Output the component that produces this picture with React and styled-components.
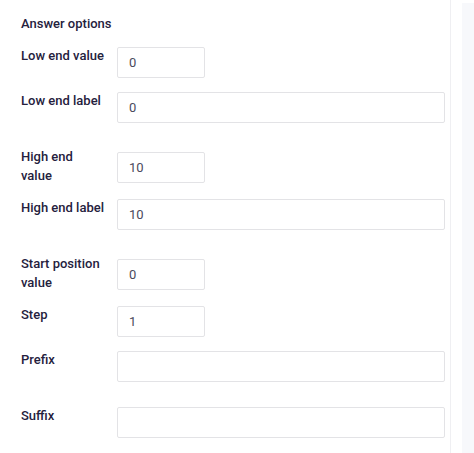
import React from "react";
import styled, { createGlobalStyle } from "styled-components";

const GlobalStyle = createGlobalStyle`
  html, body {
    margin: 0;
    padding: 0;
    background: #ffffff;
  }
  body {
    font-family: Roboto, "Noto Sans", sans-serif;
    color: #25213d;
  }
`;

const fields = [
  { label: ["Low end value"], value: "0", wide: false },
  { label: ["Low end label"], value: "0", wide: true },
  { label: ["High end", "value"], value: "10", wide: false },
  { label: ["High end label"], value: "10", wide: true },
  { label: ["Start position", "value"], value: "0", wide: false },
  { label: ["Step"], value: "1", wide: false },
  { label: ["Prefix"], value: "", wide: true },
  { label: ["Suffix"], value: "", wide: true },
];

function App() {
  return (
    <>
      <GlobalStyle />
      <Page>
        <Panel>
          <Title>Answer options</Title>
          {fields.map((f) => (
            <Row key={f.label.join(" ")} $wide={f.wide}>
              <Label>
                {f.label.map((line, i) => (
                  <span key={i}>
                    {i > 0 && <br />}
                    {line}
                  </span>
                ))}
              </Label>
              <Input
                $wide={f.wide}
                $tall={f.label.length > 1}
                defaultValue={f.value}
              />
            </Row>
          ))}
        </Panel>
        <Side />
      </Page>
    </>
  );
}

export default App;

const Page = styled.div`
  display: flex;
  flex-direction: row;
  height: 453px;
  width: 474px;
  overflow: hidden;
`;

const Panel = styled.div`
  width: 429px;
  padding: 14px 0 0 21px;
  border-right: 1px solid #efeff2;
  display: flex;
  flex-direction: column;
  gap: 13px;
`;

const Side = styled.div`
  flex: 1;
  margin-left: 11px;
  margin-top: 3px;
  background: #f7f8fb;
`;

const Title = styled.div`
  font-size: 13px;
  font-weight: 500;
  line-height: 19px;
`;

const Row = styled.div`
  display: flex;
  flex-direction: row;
  align-items: flex-start;
  margin-bottom: ${(props) => (props.$wide ? "11px" : "0")};
`;

const Label = styled.label`
  width: 96px;
  flex-shrink: 0;
  white-space: nowrap;
  font-size: 13px;
  font-weight: 500;
  line-height: 19px;
`;

const Input = styled.input`
  box-sizing: border-box;
  width: ${(props) => (props.$wide ? "328px" : "88px")};
  height: 31px;
  margin-top: ${(props) => (props.$tall ? "5px" : "1px")};
  padding: 0 11px;
  border: 1px solid #e3e3e6;
  border-radius: 2px;
  font-family: Roboto, "Noto Sans", sans-serif;
  font-size: 13px;
  color: #4b4a5c;
  outline: none;
`;
